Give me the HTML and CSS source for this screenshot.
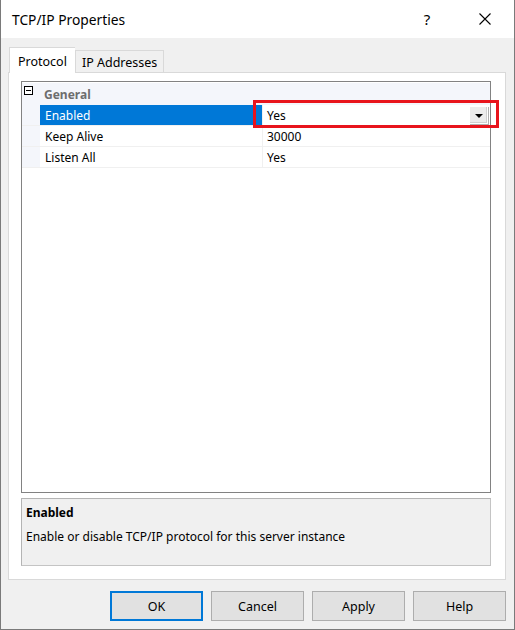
FILE: index.html
```html
<!DOCTYPE html>
<html>
<head>
<meta charset="utf-8">
<link rel="stylesheet" href="styles.css">
</head>
<body>
<div class="window">
  <div class="titlebar">
    <span class="title">TCP/IP Properties</span>
    <span class="tb-help">?</span>
    <span class="tb-close">
      <svg width="12" height="12" viewBox="0 0 12 12"><path d="M0.5 0.5 L11.5 11.5 M11.5 0.5 L0.5 11.5" stroke="#000" stroke-width="1.1" fill="none"/></svg>
    </span>
  </div>
  <div class="body">
    <div class="tabs">
      <div class="tab selected">Protocol</div>
      <div class="tab">IP Addresses</div>
    </div>
    <div class="panel">
      <div class="grid">
        <div class="row cat">
          <div class="gutter"><span class="minus"></span></div>
          <div class="catname">General</div>
        </div>
        <div class="row">
          <div class="gutter"></div>
          <div class="name sel">Enabled</div>
          <div class="value">Yes</div>
        </div>
        <div class="row">
          <div class="gutter"></div>
          <div class="name">Keep Alive</div>
          <div class="value">30000</div>
        </div>
        <div class="row">
          <div class="gutter"></div>
          <div class="name">Listen All</div>
          <div class="value">Yes</div>
        </div>
        <div class="dropbtn"><span class="tri"></span></div>
        <div class="highlight"></div>
      </div>
      <div class="helpbox">
        <div class="help-title">Enabled</div>
        <div class="help-text">Enable or disable TCP/IP protocol for this server instance</div>
      </div>
    </div>
    <div class="buttons">
      <button class="btn default">OK</button>
      <button class="btn">Cancel</button>
      <button class="btn">Apply</button>
      <button class="btn">Help</button>
    </div>
  </div>
</div>
</body>
</html>
```
FILE: styles.css
```css
* { box-sizing: border-box; }
html, body { margin: 0; padding: 0; background: #fff; }
body { font-family: "Noto Sans", "Open Sans", sans-serif; font-size: 12px; color: #000; }

.window {
  width: 515px; height: 630px;
  border-left: 1px solid #7a7a7a;
  border-right: 1px solid #7a7a7a;
  border-bottom: 1px solid #7a7a7a;
  display: flex; flex-direction: column;
  background: #f0f0f0;
}
.titlebar {
  height: 38px; background: #fff;
  display: flex; align-items: center;
  padding-left: 11px;
}
.title { font-size: 13.8px; flex: 1; }
.tb-help { width: 20px; text-align: center; font-size: 15px; margin-right: 42px; }
.tb-close { width: 12px; height: 12px; margin-right: 23px; display: flex; }

.body { flex: 1; padding: 8px 8px 0 7px; display: flex; flex-direction: column; }

.tabs { display: flex; align-items: flex-end; height: 26px; padding-left: 1px; position: relative; z-index: 1; }
.tab {
  height: 22px; padding: 0 6px; line-height: 23px; font-size: 12.5px;
  border: 1px solid #d9d9d9; border-bottom: none; background: #f0f0f0;
}
.tab.selected { height: 26px; background: #fff; border-right: none; padding: 0 8px 0 8px; line-height: 27px; margin-bottom: -1px; }

.panel {
  height: 508px; background: #fff; border: 1px solid #d9d9d9;
  padding: 8px 14px 12px 12px;
  display: flex; flex-direction: column;
}
.grid {
  position: relative;
  height: 412px; border: 1px solid #828282;
  display: flex; flex-direction: column;
  padding-top: 1px;
}
.row { display: flex; height: 21px; line-height: 22px; border-bottom: 1px solid #f0f0f0; }
.row.cat { background: #f4f6fb; border-bottom: none; height: 22px; line-height: 24px; }
.gutter { width: 18px; flex: none; background: #f4f6fb; position: relative; }
.minus {
  position: absolute; left: 2px; top: 3px; width: 9px; height: 9px;
  border: 1px solid #000; background: #fff;
}
.minus::after { content: ""; position: absolute; left: 1px; right: 1px; top: 3px; height: 1px; background: #000; }
.catname { padding-left: 4px; font-weight: bold; color: #6d6d6d; }
.name { width: 223px; padding-left: 5px; border-right: 1px solid #f0f0f0; }
.name.sel { background: #0078d7; color: #fff; }
.value { flex: 1; padding-left: 4px; }

.dropbtn {
  position: absolute; left: 447px; top: 24px; width: 19px; height: 18px;
  background: #ececec; border: 1px solid #fff; box-shadow: 1px 1px 0 #b0b0b0, inset -1px -1px 0 #d0d0d0;
  display: flex; align-items: center; justify-content: center;
}
.tri { width: 0; height: 0; border-left: 4px solid transparent; border-right: 4px solid transparent; border-top: 4px solid #000; margin-top: 1px; }
.highlight {
  position: absolute; left: 231px; top: 18px; width: 246px; height: 28px;
  border: 3px solid #e8141c;
}

.helpbox {
  margin-top: 5px; height: 68px; background: #f0f0f0;
  border: 1px solid #b4b4b4; border-right-color: #c4c4c4; border-bottom-color: #c4c4c4;
  padding: 5px 4px 3px;
}
.help-title { font-weight: bold; line-height: 18px; }
.help-text { margin-top: 6px; line-height: 18px; }

.buttons { display: flex; justify-content: flex-end; gap: 8px; padding-top: 11px; padding-right: 0; }
.btn {
  width: 93px; height: 30px; background: #e1e1e1; border: 1px solid #adadad;
  font-family: "Noto Sans", "Open Sans", sans-serif; font-size: 12.5px; color: #000; padding: 0;
}
.btn.default { border: 1px solid #0078d7; box-shadow: inset 0 0 0 1px #0078d7; }
```
